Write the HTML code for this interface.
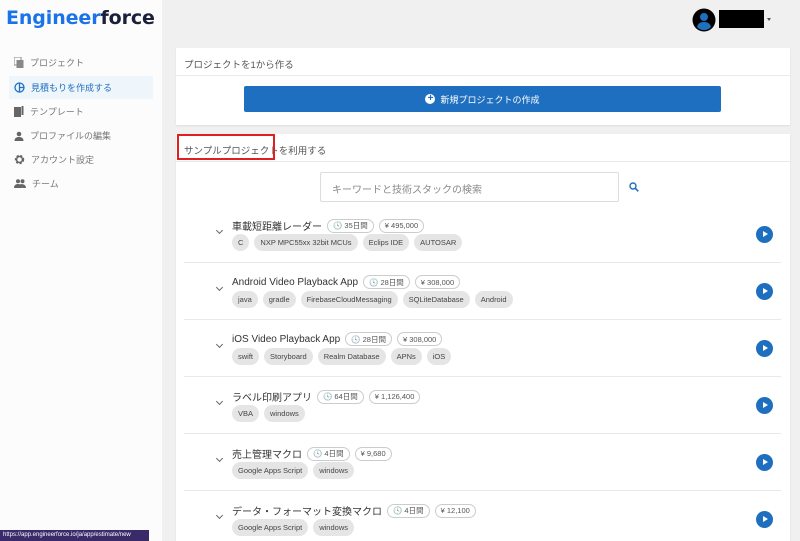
<!DOCTYPE html>
<html><head><meta charset="utf-8"><style>
*{box-sizing:border-box;margin:0;padding:0}
html,body{width:800px;height:541px;overflow:hidden}
body{background:#f0f0f0;font-family:"Liberation Sans","Noto Sans CJK JP",sans-serif;position:relative;color:#333}
.side{position:absolute;left:0;top:0;width:162px;height:541px;background:#fcfcfc}
.logo{position:absolute;left:6px;top:7px;font-size:19px;font-weight:bold;letter-spacing:-0.1px;font-family:"DejaVu Sans","Liberation Sans",sans-serif}
.logo .a{color:#1a73e8}.logo .b{color:#1a1f3a}
.nav{position:absolute;left:9px;width:144px;height:23px;font-size:9px;color:#777;display:flex;align-items:center;padding-left:5px}
.nav svg{margin-right:6px}
.nav.act{background:#eef5fb;color:#1e6fbf}
.card{position:absolute;left:176px;width:614px;background:#fff;box-shadow:0 1px 2px rgba(0,0,0,.08)}
.hd{height:28px;border-bottom:1px solid #eaeaea;font-size:9.5px;color:#555;padding:9px 8px}
.btn{position:absolute;left:68px;top:38px;width:477px;height:26px;background:#1e6fbf;border-radius:2px;color:#fff;font-size:9px;display:flex;align-items:center;justify-content:center}
.btn i{display:inline-block;width:10px;height:10px;border-radius:50%;background:#fff;color:#1e6fbf;font-style:normal;font-size:10px;line-height:10px;text-align:center;font-weight:bold;margin-right:5px}
.search{position:absolute;left:144px;top:38px;width:299px;height:30px;border:1px solid #ddd;border-radius:2px;font-size:10px;color:#888;padding:8px 11px}
.row{position:absolute;left:8px;width:597px;height:57px;border-bottom:1px solid #e8e8e8}
.chev{position:absolute;left:33px;top:22px;width:5px;height:5px;border-right:1.3px solid #666;border-bottom:1.3px solid #666;transform:rotate(45deg)}
.tt{position:absolute;left:48px;top:12px;display:flex;align-items:center;font-size:10px;color:#333;white-space:nowrap}
.pill{border:1px solid #ccc;border-radius:8px;height:14px;font-size:7.5px;padding:0 5px;display:flex;align-items:center;margin-left:5px;color:#555}
.tags{position:absolute;left:48px;top:28px;display:flex}
.tag{background:#e5e5e5;border-radius:9px;height:17px;font-size:7.5px;color:#444;padding:0 6px;display:flex;align-items:center;margin-right:5px}
.play{position:absolute;left:572px;top:20px;width:17px;height:17px;border-radius:50%;background:#1e6fbf}
.play:after{content:"";position:absolute;left:7px;top:5px;border-left:5px solid #fff;border-top:3.5px solid transparent;border-bottom:3.5px solid transparent}
</style></head><body>
<div class="side">
<div class="logo"><span class="a">Engineer</span><span class="b">force</span></div>
<div class="nav" style="top:51px"><svg width="10" height="11" viewBox="0 0 10 11"><rect x="0" y="0" width="7" height="8" fill="none" stroke="#888"/><rect x="2.5" y="3" width="7" height="8" fill="#888"/></svg>プロジェクト</div>
<div class="nav act" style="top:76px"><svg width="11" height="11" viewBox="0 0 11 11"><circle cx="5.5" cy="5.5" r="4.5" fill="none" stroke="#1e6fbf" stroke-width="1.3"/><path d="M5.5 1v9M5.5 5.5h4.5" stroke="#1e6fbf" stroke-width="1.3"/></svg>見積もりを作成する</div>
<div class="nav" style="top:100px"><svg width="10" height="11" viewBox="0 0 10 11"><rect x="0" y="1" width="7" height="10" fill="#666"/><rect x="7.5" y="0" width="2" height="9" fill="#666"/></svg>テンプレート</div>
<div class="nav" style="top:124px"><svg width="10" height="10" viewBox="0 0 10 10"><circle cx="5" cy="3" r="2.3" fill="#666"/><path d="M0.5 10c0-3 2-4 4.5-4s4.5 1 4.5 4z" fill="#666"/></svg>プロファイルの編集</div>
<div class="nav" style="top:148px"><svg width="11" height="11" viewBox="0 0 11 11"><circle cx="5.5" cy="5.5" r="3.5" fill="none" stroke="#666" stroke-width="2.4" stroke-dasharray="2 1.4"/><circle cx="5.5" cy="5.5" r="3" fill="none" stroke="#666" stroke-width="1.5"/></svg>アカウント設定</div>
<div class="nav" style="top:172px"><svg width="12" height="9" viewBox="0 0 12 9"><circle cx="4" cy="2.3" r="2" fill="#666"/><circle cx="8.5" cy="2.3" r="2" fill="#666"/><path d="M0 9c0-3 2-4 4-4s4 1 4 4zM6 5.3c3-.6 6 .5 6 3.7H8.5z" fill="#666"/></svg>チーム</div>
<div style="position:absolute;left:0;top:530px;width:149px;height:11px;background:#3a2a6a;color:#fff;font-size:6px;padding:2px 3px;white-space:nowrap">https://app.engineerforce.io/ja/app/estimate/new</div>
</div>
<svg style="position:absolute;left:692px;top:8px" width="24" height="24" viewBox="0 0 24 24"><circle cx="12" cy="12" r="11.5" fill="#000"/><circle cx="12" cy="9" r="4" fill="#1e6fbf"/><path d="M5 19c1-4 4-5 7-5s6 1 7 5c-2 2-4 3-7 3s-5-1-7-3z" fill="#1e6fbf"/></svg>
<div style="position:absolute;left:719px;top:10px;width:45px;height:18px;background:#000"></div>
<div style="position:absolute;left:767px;top:18px;border-top:3px solid #555;border-left:2.5px solid transparent;border-right:2.5px solid transparent"></div>
<div class="card" style="top:48px;height:77px"><div class="hd">プロジェクトを1から作る</div><div class="btn"><i>+</i>新規プロジェクトの作成</div></div>
<div class="card" style="top:134px;height:407px"><div class="hd" style="padding-left:8px">サンプルプロジェクトを利用する</div>
<div style="position:absolute;left:1px;top:0;width:98px;height:26px;border:2px solid #e02020"></div>
<div class="search">キーワードと技術スタックの検索</div>
<svg style="position:absolute;left:453px;top:48px" width="10" height="10" viewBox="0 0 10 10"><circle cx="4" cy="4" r="3" fill="none" stroke="#1e6fbf" stroke-width="1.4"/><path d="M6.2 6.2L9.3 9.3" stroke="#1e6fbf" stroke-width="1.6"/></svg>
<div class="row" style="top:72px"><div class="chev"></div><div class="tt">車載短距離レーダー<span class="pill">🕓 35日間</span><span class="pill">¥ 495,000</span></div><div class="tags"><span class="tag">C</span><span class="tag">NXP MPC55xx 32bit MCUs</span><span class="tag">Eclips IDE</span><span class="tag">AUTOSAR</span></div><div class="play"></div></div>
<div class="row" style="top:129px"><div class="chev"></div><div class="tt">Android Video Playback App<span class="pill">🕓 28日間</span><span class="pill">¥ 308,000</span></div><div class="tags"><span class="tag">java</span><span class="tag">gradle</span><span class="tag">FirebaseCloudMessaging</span><span class="tag">SQLiteDatabase</span><span class="tag">Android</span></div><div class="play"></div></div>
<div class="row" style="top:186px"><div class="chev"></div><div class="tt">iOS Video Playback App<span class="pill">🕓 28日間</span><span class="pill">¥ 308,000</span></div><div class="tags"><span class="tag">swift</span><span class="tag">Storyboard</span><span class="tag">Realm Database</span><span class="tag">APNs</span><span class="tag">iOS</span></div><div class="play"></div></div>
<div class="row" style="top:243px"><div class="chev"></div><div class="tt">ラベル印刷アプリ<span class="pill">🕓 64日間</span><span class="pill">¥ 1,126,400</span></div><div class="tags"><span class="tag">VBA</span><span class="tag">windows</span></div><div class="play"></div></div>
<div class="row" style="top:300px"><div class="chev"></div><div class="tt">売上管理マクロ<span class="pill">🕓 4日間</span><span class="pill">¥ 9,680</span></div><div class="tags"><span class="tag">Google Apps Script</span><span class="tag">windows</span></div><div class="play"></div></div>
<div class="row" style="top:357px"><div class="chev"></div><div class="tt">データ・フォーマット変換マクロ<span class="pill">🕓 4日間</span><span class="pill">¥ 12,100</span></div><div class="tags"><span class="tag">Google Apps Script</span><span class="tag">windows</span></div><div class="play"></div></div>
</div>
</body></html>
